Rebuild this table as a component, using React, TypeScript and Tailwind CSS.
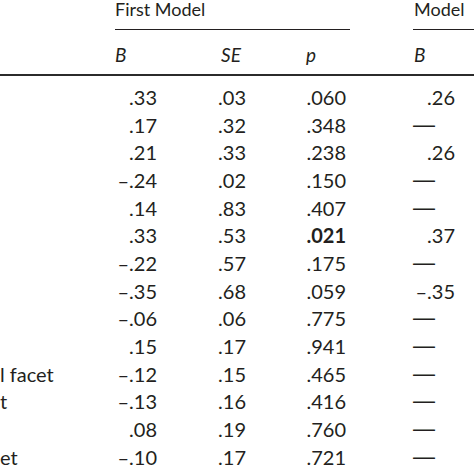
import React from 'react';

type Row = {
  label?: string;
  b: string;
  se: string;
  p: string;
  bold?: boolean;
  mb: string;
};

const rows: Row[] = [
  { b: '.33', se: '.03', p: '.060', mb: '.26' },
  { b: '.17', se: '.32', p: '.348', mb: '—' },
  { b: '.21', se: '.33', p: '.238', mb: '.26' },
  { b: '–.24', se: '.02', p: '.150', mb: '—' },
  { b: '.14', se: '.83', p: '.407', mb: '—' },
  { b: '.33', se: '.53', p: '.021', bold: true, mb: '.37' },
  { b: '–.22', se: '.57', p: '.175', mb: '—' },
  { b: '–.35', se: '.68', p: '.059', mb: '–.35' },
  { b: '–.06', se: '.06', p: '.775', mb: '—' },
  { b: '.15', se: '.17', p: '.941', mb: '—' },
  { label: 'l facet', b: '–.12', se: '.15', p: '.465', mb: '—' },
  { label: 't', b: '–.13', se: '.16', p: '.416', mb: '—' },
  { b: '.08', se: '.19', p: '.760', mb: '—' },
  { label: 'et', b: '–.10', se: '.17', p: '.721', mb: '—' },
];

export default function App() {
  return (
    <div className="w-[474px] h-[474px] overflow-hidden bg-white text-[#231f20] text-[20px] leading-[20px] font-['Lato',sans-serif]">
      {/* model titles */}
      <div className="flex h-[29px] text-[18px] leading-[18px]">
        <div className="w-[115px] shrink-0" />
        <div className="w-[299px] shrink-0">First Model</div>
        <div>Model</div>
      </div>

      {/* spanner rules */}
      <div className="flex h-[1px]">
        <div className="w-[115px] shrink-0" />
        <div className="w-[235px] shrink-0 bg-[#231f20]" />
        <div className="w-[63px] shrink-0" />
        <div className="flex-1 bg-[#231f20]" />
      </div>

      {/* column heads */}
      <div className="flex h-[44px] items-center pt-[5px] italic text-[19px]">
        <div className="w-[115px] shrink-0" />
        <div className="w-[106px] shrink-0">B</div>
        <div className="w-[85px] shrink-0">SE</div>
        <div className="w-[108px] shrink-0">p</div>
        <div>B</div>
      </div>

      <div className="h-[2px] bg-[#2b2b2b]" />

      <div className="pt-[7px]">
        {rows.map((r, i) => (
          <div key={i} className="flex h-[27.7px] items-center">
            <div className="w-[105px] shrink-0 whitespace-nowrap">{r.label}</div>
            <div className="w-[52px] shrink-0 text-right">{r.b}</div>
            <div className="w-[89px] shrink-0 text-right">{r.se}</div>
            <div className={`w-[100px] shrink-0 text-right ${r.bold ? 'font-bold' : ''}`}>{r.p}</div>
            <div className="w-[67px] shrink-0" />
            {r.mb === '—' ? (
              <div className="w-[42px] shrink-0 text-left font-['Liberation_Sans',sans-serif] text-[22px]">—</div>
            ) : (
              <div className="w-[42px] shrink-0 text-right">{r.mb}</div>
            )}
          </div>
        ))}
      </div>
    </div>
  );
}
